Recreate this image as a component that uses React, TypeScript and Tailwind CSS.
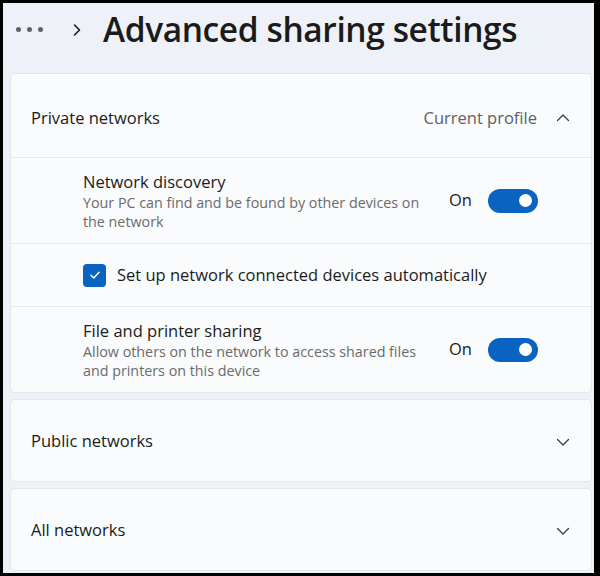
import React from "react";

const font = { fontFamily: '"Open Sans", "Noto Sans", sans-serif' };

function Toggle() {
  return (
    <div className="flex items-center gap-[16px]">
      <span className="text-[16.5px] text-[#1b1b1b]">On</span>
      <div className="w-[50px] h-[24px] rounded-full bg-[#0a63c0] flex items-center justify-end pr-[6px]">
        <div className="w-[13px] h-[13px] rounded-full bg-white" />
      </div>
    </div>
  );
}

function ChevronDown() {
  return (
    <svg width="16" height="16" viewBox="0 0 16 16" fill="none">
      <path d="M2.5 5.5 L8 11 L13.5 5.5" stroke="#3b3b3b" strokeWidth="1.3" strokeLinecap="round" strokeLinejoin="round" />
    </svg>
  );
}

function ChevronUp() {
  return (
    <svg width="16" height="16" viewBox="0 0 16 16" fill="none">
      <path d="M2.5 10.5 L8 5 L13.5 10.5" stroke="#3b3b3b" strokeWidth="1.3" strokeLinecap="round" strokeLinejoin="round" />
    </svg>
  );
}

export default function App() {
  return (
    <div className="w-[600px] h-[576px] bg-black pt-[3px] pl-[3px] pr-[6px] pb-[3px]" style={font}>
      <div className="w-full h-full bg-[#eef2f8] flex flex-col pl-[7px] pr-[2px]">
        {/* Header */}
        <div className="h-[70px] flex items-center shrink-0 pb-[17px]">
          <div className="flex items-center gap-[6px] ml-[6px]">
            <span className="w-[5px] h-[5px] rounded-full bg-[#5f6368]" />
            <span className="w-[5px] h-[5px] rounded-full bg-[#5f6368]" />
            <span className="w-[5px] h-[5px] rounded-full bg-[#5f6368]" />
          </div>
          <svg className="ml-[28px]" width="12" height="16" viewBox="0 0 12 16" fill="none">
            <path d="M3.5 3 L8.5 8 L3.5 13" stroke="#1b1b1b" strokeWidth="1.6" strokeLinecap="round" strokeLinejoin="round" />
          </svg>
          <h1 className="ml-[20px] text-[33.5px] font-semibold text-[#1b1b1b] tracking-[-0.4px]">Advanced sharing settings</h1>
        </div>

        {/* Card 1 */}
        <div className="bg-[#f9fbfd] border border-[#e3e6ea] rounded-[5px] flex flex-col">
          <div className="h-[84px] flex items-center px-[20px] pt-[5px] border-b border-[#e5e8ec]">
            <span className="text-[16.5px] text-[#1b1b1b] flex-1">Private networks</span>
            <span className="text-[16.5px] text-[#5f5f5f] mr-[18px]">Current profile</span>
            <ChevronUp />
          </div>
          <div className="h-[86px] flex items-center pl-[72px] pr-[53px] border-b border-[#e5e8ec]">
            <div className="flex-1 flex flex-col">
              <span className="text-[16.5px] text-[#1b1b1b] leading-[22px]">Network discovery</span>
              <span className="text-[14.3px] text-[#6b6b6b] leading-[19px] w-[345px]">Your PC can find and be found by other devices on the network</span>
            </div>
            <Toggle />
          </div>
          <div className="h-[63px] flex items-center pl-[72px] border-b border-[#e5e8ec]">
            <div className="w-[23px] h-[23px] rounded-[4px] bg-[#0a63c0] flex items-center justify-center">
              <svg width="14" height="14" viewBox="0 0 14 14" fill="none">
                <path d="M3 7.3 L5.8 10 L11 4.3" stroke="white" strokeWidth="1.5" strokeLinecap="round" strokeLinejoin="round" />
              </svg>
            </div>
            <span className="ml-[11px] text-[16.5px] text-[#1b1b1b]">Set up network connected devices automatically</span>
          </div>
          <div className="h-[85px] flex items-center pl-[72px] pr-[53px]">
            <div className="flex-1 flex flex-col">
              <span className="text-[16.5px] text-[#1b1b1b] leading-[22px]">File and printer sharing</span>
              <span className="text-[14.3px] text-[#6b6b6b] leading-[19px] w-[345px]">Allow others on the network to access shared files and printers on this device</span>
            </div>
            <Toggle />
          </div>
        </div>

        {/* Card 2 */}
        <div className="mt-[6px] h-[83px] bg-[#f9fbfd] border border-[#e3e6ea] rounded-[5px] flex items-center px-[20px] pt-[2px]">
          <span className="text-[16.5px] text-[#1b1b1b] flex-1">Public networks</span>
          <ChevronDown />
        </div>

        {/* Card 3 */}
        <div className="mt-[6px] h-[83px] bg-[#f9fbfd] border border-[#e3e6ea] rounded-[5px] flex items-center px-[20px] pt-[2px]">
          <span className="text-[16.5px] text-[#1b1b1b] flex-1">All networks</span>
          <ChevronDown />
        </div>
      </div>
    </div>
  );
}
